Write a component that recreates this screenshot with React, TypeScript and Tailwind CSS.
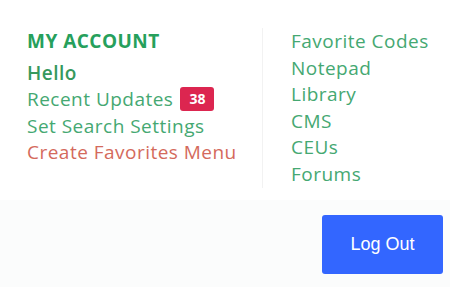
import { ReactNode } from "react"

const leftLinks = [
  { label: "Hello", bold: true },
  { label: "Recent Updates", badge: 38 },
  { label: "Set Search Settings" },
  { label: "Create Favorites Menu", alert: true },
]

const rightLinks = ["Favorite Codes", "Notepad", "Library", "CMS", "CEUs", "Forums"]

function Row({ children }: { children: ReactNode }) {
  return <div className="h-[26.6px] flex items-center whitespace-nowrap">{children}</div>
}

export default function App() {
  return (
    <div className="w-[450px] h-[300px] bg-white font-['Open_Sans',sans-serif] text-[19px] tracking-[0.48px]">
      <div className="flex pt-[28px] pl-[27px] h-[200px]">
        <div className="w-[236px] border-r border-[#f2f2f2] h-[160px]">
          <div className="mb-[5px]">
            <Row>
              <span className="font-bold text-[#26a05c]">MY ACCOUNT</span>
            </Row>
          </div>
          {leftLinks.map((l) => (
            <Row key={l.label}>
              <span
                className={
                  l.bold
                    ? "font-semibold text-[#36995d]"
                    : l.alert
                      ? "text-[#d46a5c]"
                      : "text-[#45a872]"
                }
              >
                {l.label}
              </span>
              {l.badge && (
                <span className="ml-[7px] bg-[#dc2650] text-white font-bold text-[14px] leading-none rounded-[3px] px-[9px] py-[5px] tracking-normal">
                  {l.badge}
                </span>
              )}
            </Row>
          ))}
        </div>
        <div className="pl-[28px]">
          {rightLinks.map((l) => (
            <Row key={l}>
              <span className="text-[#45a872]">{l}</span>
            </Row>
          ))}
        </div>
      </div>
      <div className="bg-[#fbfcfc] h-[87px] flex justify-end items-start pt-[15px] pr-[7px]">
        <button className="w-[121px] h-[59px] bg-[#3366ff] text-white rounded-[3px] font-['Liberation_Sans',sans-serif] text-[18px] tracking-normal">
          Log Out
        </button>
      </div>
    </div>
  )
}
